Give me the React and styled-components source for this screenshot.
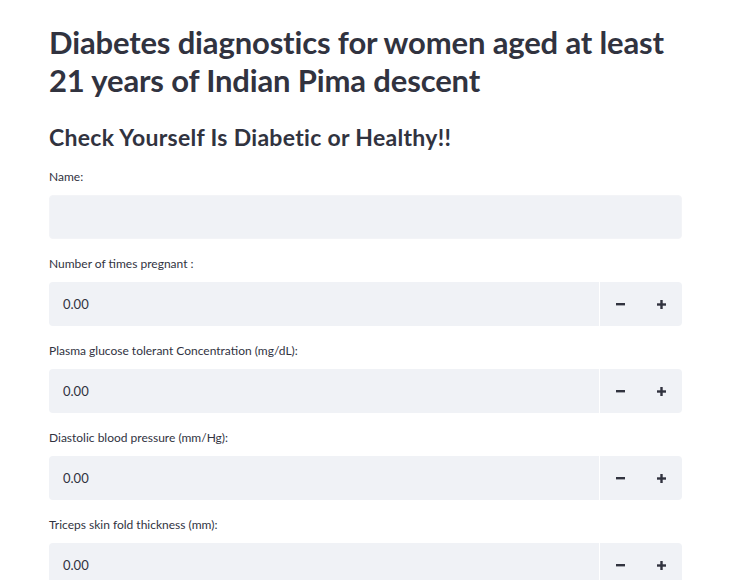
import React from "react";
import styled, { createGlobalStyle } from "styled-components";

const Global = createGlobalStyle`
	body {
		margin: 0;
		background: #ffffff;
		font-family: Lato, "Noto Sans", sans-serif;
		color: #31333f;
	}
`;

const Page = styled.div`
	width: 633px;
	padding: 23px 0 0 49px;
`;

const Title = styled.h1`
	margin: 0;
	font-size: 31px;
	line-height: 38px;
	font-weight: 700;
	letter-spacing: -0.15px;
	color: #31333f;
`;

const Subtitle = styled.h2`
	margin: 23px 0 17px;
	font-size: 23px;
	line-height: 30px;
	font-weight: 700;
	letter-spacing: 0.3px;
	color: #31333f;
`;

const Field = styled.div`
	display: flex;
	flex-direction: column;
	gap: 10px;
	margin-bottom: 17px;
`;

const Label = styled.label`
	font-size: 12px;
	line-height: 16px;
	color: #31333f;
`;

const TextBox = styled.div`
	height: 44px;
	box-sizing: border-box;
	background: #f0f2f6;
	border: 1px solid #f3f4f7;
	border-radius: 4px;
`;

const NumberBox = styled.div`
	display: flex;
	height: 44px;
	background: #f0f2f6;
	border-radius: 4px;
`;

const Value = styled.div`
	flex: 1;
	display: flex;
	align-items: center;
	padding-left: 14px;
	font-size: 13px;
	border-right: 1px solid #ffffff;
`;

const StepButton = styled.div`
	width: 41px;
	display: flex;
	align-items: center;
	justify-content: center;
`;

const Minus = () => (
	<svg width="9" height="3" viewBox="0 0 9 3">
		<rect x="0" y="0" width="9" height="2.4" fill="#31333f" />
	</svg>
);

const Plus = () => (
	<svg width="9" height="9" viewBox="0 0 9 9">
		<rect x="0" y="3.3" width="9" height="2.4" fill="#31333f" />
		<rect x="3.3" y="0" width="2.4" height="9" fill="#31333f" />
	</svg>
);

const numberFields = [
	"Number of times pregnant :",
	"Plasma glucose tolerant Concentration (mg/dL):",
	"Diastolic blood pressure (mm/Hg):",
	"Triceps skin fold thickness (mm):",
];

const App = () => {
	return (
		<>
			<Global />
			<Page>
				<Title>
					Diabetes diagnostics for women aged at least 21 years of Indian Pima
					descent
				</Title>
				<Subtitle>Check Yourself Is Diabetic or Healthy!!</Subtitle>
				<Field>
					<Label>Name:</Label>
					<TextBox />
				</Field>
				{numberFields.map((label) => (
					<Field key={label}>
						<Label>{label}</Label>
						<NumberBox>
							<Value>0.00</Value>
							<StepButton>
								<Minus />
							</StepButton>
							<StepButton>
								<Plus />
							</StepButton>
						</NumberBox>
					</Field>
				))}
			</Page>
		</>
	);
};

export default App;
